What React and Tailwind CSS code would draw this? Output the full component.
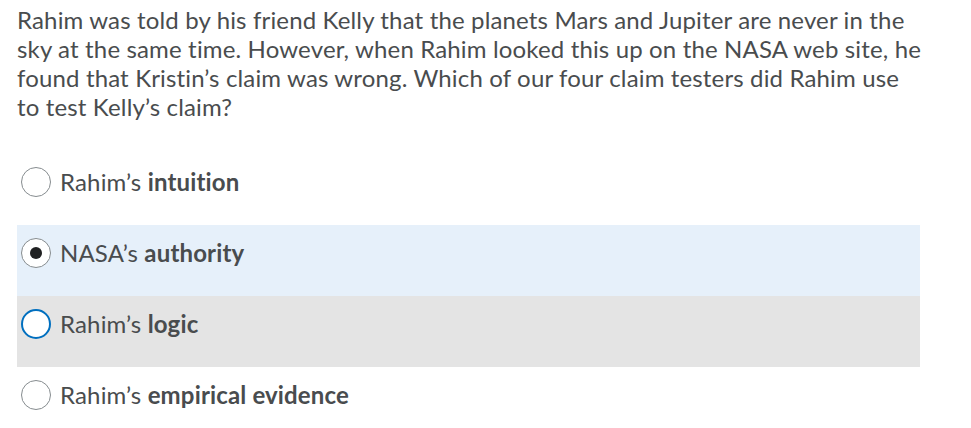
export default function App() {
  const options = [
    { pre: "Rahim’s", bold: "intuition", state: "none" },
    { pre: "NASA’s", bold: "authority", state: "checked" },
    { pre: "Rahim’s", bold: "logic", state: "focus" },
    { pre: "Rahim’s", bold: "empirical evidence", state: "none" },
  ];

  const rowBg = {
    none: "bg-white",
    checked: "bg-[#e6f0fa]",
    focus: "bg-[#e4e4e4]",
  };

  return (
    <div
      className="w-[971px] h-[428px] bg-white overflow-hidden text-[#494c4e]"
      style={{ fontFamily: "Lato, 'Open Sans', sans-serif" }}
    >
      {/* Question */}
      <p className="pl-[17px] pt-[5px] text-[24px] leading-[29px] tracking-[0.15px] whitespace-nowrap">
        Rahim was told by his friend Kelly that the planets Mars and Jupiter are never in the
        <br />
        sky at the same time. However, when Rahim looked this up on the NASA web site, he
        <br />
        found that Kristin’s claim was wrong. Which of our four claim testers did Rahim use
        <br />
        to test Kelly’s claim?
      </p>

      {/* Options */}
      <div className="mt-[33px] w-[903px] ml-[17px]">
        {options.map((o, i) => (
          <div
            key={i}
            className={`h-[71px] flex items-start pt-[13px] pl-[4px] ${rowBg[o.state]}`}
          >
            <span
              className={`w-[30px] h-[30px] rounded-full flex items-center justify-center shrink-0 bg-white ${
                o.state === "focus"
                  ? "border-2 border-[#006fbf]"
                  : "border border-[#868c8f]"
              }`}
            >
              {o.state === "checked" && (
                <span className="w-[12px] h-[12px] rounded-full bg-[#202122]" />
              )}
            </span>
            <span className="ml-[9px] text-[24px] leading-[30px] tracking-[0.15px]">
              {o.pre} <b className="font-bold">{o.bold}</b>
            </span>
          </div>
        ))}
      </div>
    </div>
  );
}
